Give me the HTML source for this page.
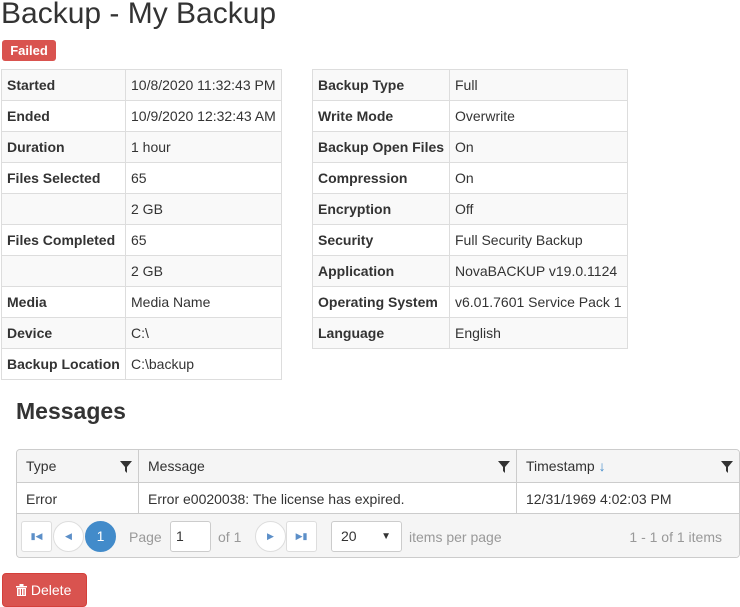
<!DOCTYPE html>
<html><head><style>
*{box-sizing:border-box}
body{margin:0;font-family:"Liberation Sans",Arial,sans-serif;font-size:14px;color:#333;background:#fff;position:relative;width:740px;height:607px;overflow:hidden}
h1{position:absolute;left:1px;top:-5px;margin:0;font-weight:400;font-size:30px;line-height:38px;color:#333}
.badge{position:absolute;left:2px;top:40px;width:54px;height:21px;background:#d9534f;color:#fff;font-weight:bold;font-size:13px;line-height:21px;text-align:center;border-radius:3px}
table.d{position:absolute;border-collapse:collapse;table-layout:fixed}
table.d td{border:1px solid #ddd;height:31px;padding:0 5px;white-space:nowrap;overflow:hidden}
table.d tr:nth-child(odd) td{background:#f9f9f9}
table.d td:first-child{font-weight:bold}
h2{position:absolute;left:16px;top:396px;margin:0;font-size:23px;font-weight:bold;line-height:30px}
.grid{position:absolute;left:16px;top:449px;width:724px;height:109px;border:1px solid #ccc;border-radius:4px;overflow:hidden}
.hd{position:absolute;top:0;left:0;right:0;height:33px;background:#f5f5f5;border-bottom:1px solid #ccc}
.row{position:absolute;top:33px;left:0;right:0;height:31px;background:#fff;border-bottom:1px solid #ccc}
.c{position:absolute;top:0;height:100%;line-height:32px;padding-left:9px}
.vl{border-left:1px solid #ccc}
.pg{position:absolute;top:64px;left:0;right:0;bottom:0;background:#f5f5f5;color:#999}
.btn{position:absolute;width:31px;height:31px;border:1px solid #ddd;background:#fff;border-radius:3px;top:7px;font-size:9px;color:#5c8fc8;text-align:center;line-height:29px}
.circ{border-radius:50%}
.fil{position:absolute;right:6px;top:11px}
</style></head><body>
<h1>Backup - My Backup</h1>
<div class="badge">Failed</div>
<table class="d" style="left:1px;top:69px;width:281px">
<colgroup><col style="width:124px"><col></colgroup>
<tr><td>Started</td><td>10/8/2020 11:32:43 PM</td></tr>
<tr><td>Ended</td><td>10/9/2020 12:32:43 AM</td></tr>
<tr><td>Duration</td><td>1 hour</td></tr>
<tr><td>Files Selected</td><td>65</td></tr>
<tr><td></td><td>2 GB</td></tr>
<tr><td>Files Completed</td><td>65</td></tr>
<tr><td></td><td>2 GB</td></tr>
<tr><td>Media</td><td>Media Name</td></tr>
<tr><td>Device</td><td>C:\</td></tr>
<tr><td>Backup Location</td><td>C:\backup</td></tr>
</table>
<table class="d" style="left:312px;top:69px;width:316px">
<colgroup><col style="width:137px"><col></colgroup>
<tr><td>Backup Type</td><td>Full</td></tr>
<tr><td>Write Mode</td><td>Overwrite</td></tr>
<tr><td>Backup Open Files</td><td>On</td></tr>
<tr><td>Compression</td><td>On</td></tr>
<tr><td>Encryption</td><td>Off</td></tr>
<tr><td>Security</td><td>Full Security Backup</td></tr>
<tr><td>Application</td><td>NovaBACKUP v19.0.1124</td></tr>
<tr><td>Operating System</td><td>v6.01.7601 Service Pack 1</td></tr>
<tr><td>Language</td><td>English</td></tr>
</table>
<h2>Messages</h2>
<div class="grid">
 <div class="hd">
  <div class="c" style="left:0;width:121px">Type<svg class="fil" width="12" height="12" viewBox="0 0 12 12"><path d="M0 0H12L7 6V12L5 10V6Z" fill="#333"/></svg></div>
  <div class="c vl" style="left:121px;width:378px">Message<svg class="fil" width="12" height="12" viewBox="0 0 12 12"><path d="M0 0H12L7 6V12L5 10V6Z" fill="#333"/></svg></div>
  <div class="c vl" style="left:499px;right:0">Timestamp <span style="color:#428bca">&#8595;</span><svg class="fil" width="12" height="12" viewBox="0 0 12 12"><path d="M0 0H12L7 6V12L5 10V6Z" fill="#333"/></svg></div>
 </div>
 <div class="row">
  <div class="c" style="left:0;width:121px">Error</div>
  <div class="c vl" style="left:121px;width:378px">Error e0020038: The license has expired.</div>
  <div class="c vl" style="left:499px;right:0">12/31/1969 4:02:03 PM</div>
 </div>
 <div class="pg">
  <div class="btn" style="left:4px">&#9646;&#9664;</div>
  <div class="btn circ" style="left:36px">&#9664;</div>
  <div class="btn circ" style="left:68px;background:#428bca;border-color:#428bca;color:#fff;font-size:14px">1</div>
  <span style="position:absolute;left:112px;top:15px">Page</span>
  <div style="position:absolute;left:153px;top:7px;width:41px;height:31px;border:1px solid #ccc;border-radius:3px;background:#fff;color:#333;padding-left:5px;line-height:29px">1</div>
  <span style="position:absolute;left:201px;top:15px">of 1</span>
  <div class="btn circ" style="left:238px">&#9654;</div>
  <div class="btn" style="left:269px">&#9654;&#9646;</div>
  <div style="position:absolute;left:314px;top:7px;width:71px;height:31px;border:1px solid #ccc;border-radius:3px;background:#fff;color:#333;padding-left:9px;line-height:29px">20<span style="position:absolute;right:10px;font-size:10px">&#9660;</span></div>
  <span style="position:absolute;left:392px;top:15px">items per page</span>
  <span style="position:absolute;right:17px;top:15px">1 - 1 of 1 items</span>
 </div>
</div>
<div style="position:absolute;left:2px;top:573px;width:85px;height:34px;background:#d9534f;border:1px solid #d43f3a;border-radius:4px;color:#fff;line-height:32px;padding-left:13px"><svg width="11" height="12" viewBox="0 0 11 12" style="vertical-align:-1px"><path d="M0 2H11V3.5H0ZM3.5 0H7.5V2H3.5ZM1 4H10V12H1Z" fill="#fff"/><path d="M3 5V11M5.5 5V11M8 5V11" stroke="#d9534f" stroke-width="1"/></svg> Delete</div>
</body></html>
